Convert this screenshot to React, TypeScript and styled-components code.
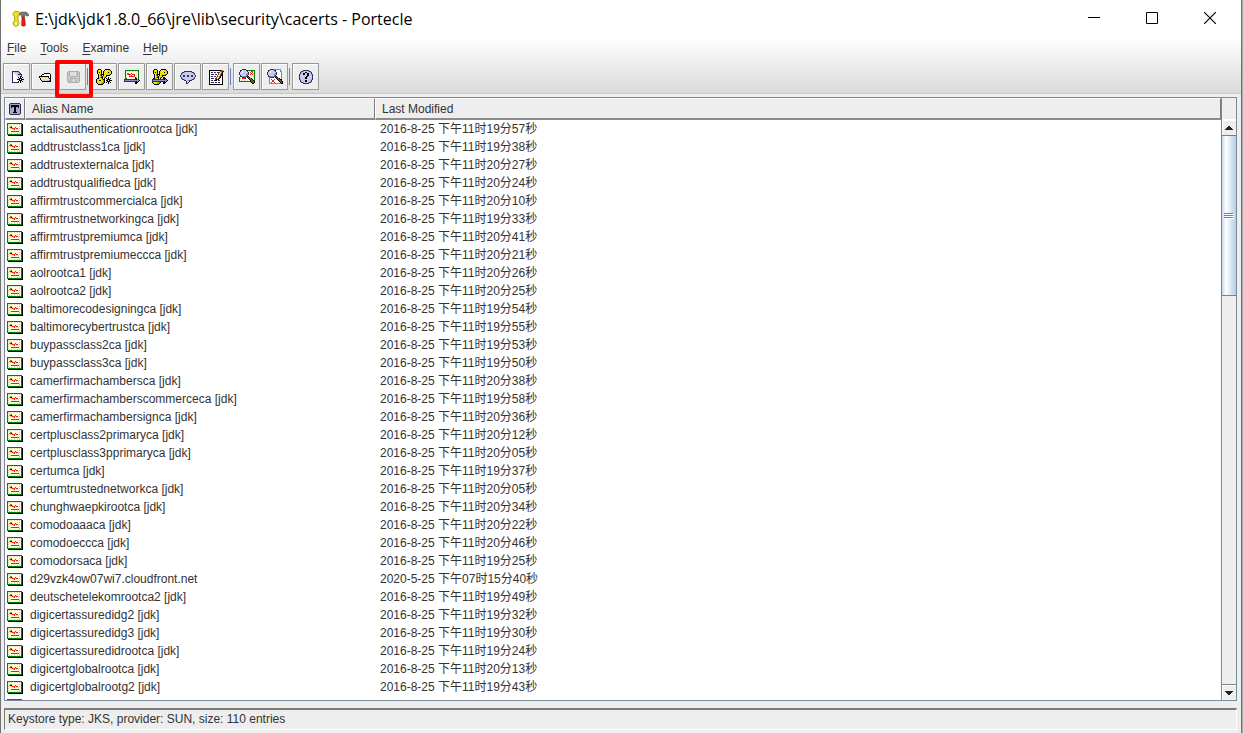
import React from 'react';
import styled, { createGlobalStyle, css } from 'styled-components';

const GlobalStyle = createGlobalStyle`
  *, *::before, *::after { box-sizing: border-box; }
  body {
    margin: 0;
    background: #a9a9ad;
    color: #333;
    font: 12px/18px "Liberation Sans", "Noto Sans CJK SC", sans-serif;
  }
  button { font: inherit; color: inherit; }
`;

const PALETTE: Record<string, string> = {
  k: '#000000', w: '#ffffff', g: '#008000', r: '#f01818', y: '#f0e000', o: '#a08c00',
  b: '#30305c', l: '#c8cce8', m: '#8a8fc0', n: '#808080', s: '#c8c8c8', d: '#adadad',
  e: '#dedede', t: '#f6dcae', c: '#8b4a22', a: '#3f9cff', p: '#d9ddfb', h: '#fff8a0',
  f: '#fdfbe4', q: '#a6a6c8', v: '#b8dca0', u: '#f0c060',
};

const CERT = [
  '................',
  'ggggggggggggggg.',
  'gfvfvffvffvfvfgk',
  'gvffffffffffffgk',
  'gffoofffffffvfgk',
  'gforkuffrfffffgk',
  'gvfuurorurrfvfgk',
  'gfffffurfufuffgk',
  'gvffffffffffvfgk',
  'gfffrrrrrrrrffgk',
  'gvffffffffffvfgk',
  'gfvfvffvffvfvfgk',
  'gggggggggggggggk',
  '.kkkkkkkkkkkkkkk',
];

const NEW = [
  '................',
  '................',
  '...bbbbbbb......',
  '...bpplllmb.....',
  '...bwpplllmb....',
  '...bwwpplbbbb...',
  '...bwwwpplllb...',
  '...bwwwwpplkb...',
  '...bwwwwwkwkwk..',
  '...bwwwwwwkkk...',
  '...bwwwwkkkwkkk.',
  '...bwwwwwwkkk...',
  '...bwwwwwkwkwk..',
  '...bbbbbbb.k....',
  '................',
  '................',
];

const OPEN = [
  '................',
  '................',
  '................',
  '................',
  '.......kkkkkk...',
  '.....kkwwwwwwk..',
  '....kwwwwwwwwk..',
  '..kkkkkkkkkkwk..',
  '..kttttttttkwk..',
  '...kttttttttkk..',
  '...kttttttttsk..',
  '....ksssssssck..',
  '.....kkkkkkkkk..',
  '................',
  '................',
  '................',
];

const SAVE = [
  '................',
  '................',
  '...ddddddddddd..',
  '..dsdeeeeeesdsd.',
  '..dsdeeeeeesdsd.',
  '..dsdeeeeeesdsd.',
  '..dsdeeeeeesdsd.',
  '..dssddddddsssd.',
  '..dsssssssssssd.',
  '..dssddddddsssd.',
  '..dssdsseedsssd.',
  '..dssdsseedsssd.',
  '..dssdsseedsssd.',
  '...ddddddddddd..',
  '................',
  '................',
];

const KEYPAIR = [
  '..kkk....kkkkk..',
  '.kyhyk..kyhyyyk.',
  '.kyyyk.kyyyyyyyk',
  '.kykyk.kyyyykyyk',
  '.kyyyk.kyyyyyyyk',
  '..kyokkkyyyyyok.',
  '..kyok.kyykkkk..',
  '..kyyokyyyk.....',
  '..kyokkyok..k...',
  '.kkyyyk.k.k.k.k.',
  'kyyyyyokk..kkk..',
  'kyykkyyok.kk.kkk',
  'kyyyyyyok..kkk..',
  'kyyyyyook.k.k.k.',
  '.kyyyook....k...',
  '..kkkkk.........',
];

const IMPORT_CERT = [
  '................',
  '.gggggggggggggg.',
  '.gfvfvffvffvfvg.',
  '.gffffffffffffg.',
  '.gfooffrffffvfg.',
  '.gforkrfrrrfffg.',
  '.gvffufrffrfvfg.',
  '.gfffrrrrrrfffg.',
  '.gvffffffffkvfg.',
  '.ggffffffffkkfg.',
  'bbbbbbbbbbbbkmk.',
  'bmmmmmmmmmmmmmmk',
  'bbbbbbbbbbbbkmk.',
  '...........kkk..',
  '...........kk...',
  '................',
];

const IMPORT_KEY = [
  '..kkk....kkkkk..',
  '.kyhyk..kyhyyyk.',
  '.kyyyk.kyyyyyyyk',
  '.kykyk.kyyyykyyk',
  '.kyyyk.kyyyyyyyk',
  '..kyokkkyyyyyok.',
  '..kyok.kyykkkk..',
  '..kyyokyyyk.....',
  '..kyokkyok.kk...',
  '.kkyyyk.k..kkk..',
  'bbbbbbbbbbbbkmk.',
  'bmmmmmmmmmmmmmmk',
  'bbbbbbbbbbbbkmk.',
  'kyyyyyook..kkk..',
  '.kyyyook...kk...',
  '..kkkkk.........',
];

const BALLOON = [
  '................',
  '................',
  '....bbbbbbbb....',
  '..bbmllllllmbb..',
  '.bmllllllllllmb.',
  '.bllllllllllllb.',
  'bllbbllbbllbbllb',
  'bllbbllbbllbbllb',
  '.bllllllllllllb.',
  '.bmllllllllllmb.',
  '..bbmllllllmbb..',
  '....bbllmbbb....',
  '......bllb......',
  '......blb.......',
  '......bb........',
  '................',
];

const REPORT = [
  '................',
  '.kkkkkkkkkkkkcc.',
  '.kwwwwwwwwwwcrck',
  '.kwbbwbbwbbctok.',
  '.kwwwwwwwwctyck.',
  '.kwbbbwbbwctckk.',
  '.kwwwwwwwctyckk.',
  '.kwbbwbbwctckwk.',
  '.kwwwwwwctyckwk.',
  '.kwbbbwbctckwwk.',
  '.kwwwwwckckwwwk.',
  '.kwbbwbkkwbbwwk.',
  '.kwwwwwwwwwwwwk.',
  '.kwbbbwbbwbbwwk.',
  '.kwwwwwwwwwwwwk.',
  '.kkkkkkkkkkkkkk.',
];

const VIEW_CERT = [
  '...bbbb.........',
  '.bbllllbbggggggg',
  '.blwllllbfvfrrfg',
  'bllwlllllbfrfrfg',
  'blllllllmbffrfvg',
  'bllllllmmbfrfrfg',
  '.blllllmbffffffg',
  '.bbmmmmbbkffffvg',
  'gffbbbbfkckffffg',
  'gvfrrrrffkcckffg',
  'gfffffffffkcckfg',
  'gfvffvffvffkcckg',
  'gggggggggggkccck',
  '............kcck',
  '.............kk.',
  '................',
];

const VIEW_CRL = [
  '...bbbbaaaaaaa..',
  '.bbllllbbwwwwa..',
  '.blwllllbwwwwaa.',
  'bllwlllllbwwwwa.',
  'blllllllmbwwwwa.',
  'bllllllmmbwwwwa.',
  '.blllllmbwwwwwa.',
  '.bbmmmmbbkwwwwa.',
  '..abbbbwkckwwwa.',
  '..awwwwwwkcckwa.',
  '..awrwwrwwkcckk.',
  '..awwrrwwwwkcck.',
  '..awwrrwwwwwkcck',
  '..awrwwrwwwwwkck',
  '..aaaaaaaaaaaakk',
  '................',
];

const HELP = [
  '................',
  '.....bbbbbb.....',
  '...bbmllllmbb...',
  '..bmlllkklllmb..',
  '..bllkkllkkllb..',
  '.bmllkkllkkllmb.',
  '.blllllllkklllb.',
  '.bllllllkkllllb.',
  '.blllllkklllllb.',
  '.blllllkklllllb.',
  '.bmllllllllllmb.',
  '..bllllkkllllb..',
  '..bmlllkklllmb..',
  '...bbmllllmbb...',
  '.....bbbbbb.....',
  '................',
];

const TYPE = [
  '............',
  '.bbbbbbbbbb.',
  'bqqqqqqqqqqb',
  'bqkkkkkkkkqb',
  'bqkkkkkkkkqb',
  'bqkqqkkqqkqb',
  'bqqqqkkqqqqb',
  'bqqqqkkqqqqb',
  'bqqqqkkqqqqb',
  'bqqqqkkqqqqb',
  'bqqqkkkkqqqb',
  'bqqqqqqqqqqb',
  '.bbbbbbbbbb.',
];

const IconSvg = styled.svg`
  display: block;
  flex: none;
`;

const PixelIcon = ({ map }: { map: string[] }) => {
  const shapes: Record<string, string> = {};
  map.forEach((line, y) => {
    [...line].forEach((ch, x) => {
      if (ch !== '.') shapes[ch] = (shapes[ch] || '') + `M${x} ${y}h1v1h-1z`;
    });
  });
  const w = map[0].length;
  return (
    <IconSvg width={w} height={map.length} viewBox={`0 0 ${w} ${map.length}`} shapeRendering="crispEdges" aria-hidden="true">
      {Object.entries(shapes).map(([ch, d]) => <path key={ch} d={d} fill={PALETTE[ch]} />)}
    </IconSvg>
  );
};

const Window = styled.div`
  display: flex;
  flex-direction: column;
  height: 100vh;
  margin-right: 1px;
  border: solid #707070;
  border-width: 0 1px;
  background: #eee;
`;

const TitleBar = styled.header`
  display: flex;
  align-items: center;
  height: 38px;
  padding: 0 2px 0 10px;
  background: #fff;
`;

const Title = styled.h1`
  flex: 1;
  margin: 0 0 0 6px;
  color: #000;
  font: 400 16px/20px "Open Sans", sans-serif;
  white-space: nowrap;
`;

const CaptionButton = styled.button`
  display: grid;
  place-items: center;
  align-self: flex-start;
  width: 58px;
  height: 36px;
  padding: 0;
  border: 0;
  background: none;
`;

const Bars = styled.div`
  flex: none;
  border-bottom: 1px solid #c8c8c8;
  background: linear-gradient(#fff, #dadada);
`;

const MenuBar = styled.nav`
  display: flex;
  gap: 14px;
  height: 20px;
  padding-left: 6px;
`;

const MenuItem = styled.button`
  padding: 0;
  border: 0;
  background: none;
  line-height: 20px;
`;

const Mnemonic = styled.span`
  text-decoration: underline;
  text-underline-offset: 2px;
`;

const ToolBar = styled.div`
  display: flex;
  gap: 1px;
  padding: 5px 2px 3px;
`;

const ToolButton = styled.button`
  display: grid;
  place-items: center;
  width: 27px;
  height: 27px;
  padding: 1px 0 0 1px;
  border: 1px solid #999;
  background: #eee;
  box-shadow: inset 1px 1px #fff;
`;

const Marked = styled.div`
  position: relative;

  &::after {
    content: "";
    position: absolute;
    inset: -3px -7px -8px -4px;
    border: 4px solid #ff0000;
    border-radius: 2px;
  }
`;

const Divider = styled.span`
  width: 1px;
  height: 17px;
  margin: 5px 1px 0 0;
  background: #6382bf;
`;

const Pane = styled.main`
  display: flex;
  flex: 1;
  min-height: 0;
  margin: 3px 4px 7px 3px;
  border: 1px solid #7a8a99;
`;

const TableView = styled.div`
  flex: 1;
  overflow: hidden;
  background: #fff;
`;

const Table = styled.table`
  width: 100%;
  table-layout: fixed;
  border-collapse: separate;
  border-spacing: 0;
`;

const HeadCell = styled.th<{ $icon?: boolean }>`
  height: 22px;
  padding: 0 0 0 6px;
  border: solid;
  border-width: 1px 1px 2px 1px;
  border-color: #fff #7a7a7a #8c8c8c #fff;
  background: #eee;
  font-weight: 400;
  text-align: left;
  ${(p) => p.$icon && css`padding: 0 0 0 3px;`}
`;

const Cell = styled.td<{ $icon?: boolean }>`
  height: 18px;
  padding: 0 5px;
  white-space: nowrap;
  ${(p) => p.$icon && css`padding: 0 0 0 2px;`}
`;

const ScrollColumn = styled.div`
  display: flex;
  flex-direction: column;
  width: 15px;
  border-left: 1px solid #7a8a99;
  background: #eee;
`;

const Corner = styled.div`
  height: 22px;
  border-bottom: 1px solid #fff;
`;

const ScrollButton = styled.button`
  display: grid;
  place-items: center;
  flex: none;
  height: 15px;
  padding: 0;
  border: 0;
  background: #eee;
  box-shadow: inset 1px 1px #fff;
`;

const Track = styled.div`
  flex: 1;
  border-bottom: 1px solid #7a8a99;
`;

const Thumb = styled.div`
  display: grid;
  place-items: center;
  height: calc(100% * 32 / 109);
  margin-left: -1px;
  border: 1px solid #6382bf;
  border-right: 0;
  background: linear-gradient(90deg, #c8d8ea, #fff 30%, #dce8f2 60%, #b8cfe5);
`;

const StatusBar = styled.footer`
  flex: none;
  height: 22px;
  margin: 0 4px 3px 3px;
  padding-left: 3px;
  border: solid;
  border-width: 2px 1px 1px 1px;
  border-color: #7a7a7a #fff #fff #7a7a7a;
  line-height: 18px;
`;

const T = '2016-8-25 下午11时';
const ENTRIES: [string, string][] = [
  ['actalisauthenticationrootca [jdk]', T + '19分57秒'],
  ['addtrustclass1ca [jdk]', T + '19分38秒'],
  ['addtrustexternalca [jdk]', T + '20分27秒'],
  ['addtrustqualifiedca [jdk]', T + '20分24秒'],
  ['affirmtrustcommercialca [jdk]', T + '20分10秒'],
  ['affirmtrustnetworkingca [jdk]', T + '19分33秒'],
  ['affirmtrustpremiumca [jdk]', T + '20分41秒'],
  ['affirmtrustpremiumeccca [jdk]', T + '20分21秒'],
  ['aolrootca1 [jdk]', T + '20分26秒'],
  ['aolrootca2 [jdk]', T + '20分25秒'],
  ['baltimorecodesigningca [jdk]', T + '19分54秒'],
  ['baltimorecybertrustca [jdk]', T + '19分55秒'],
  ['buypassclass2ca [jdk]', T + '19分53秒'],
  ['buypassclass3ca [jdk]', T + '19分50秒'],
  ['camerfirmachambersca [jdk]', T + '20分38秒'],
  ['camerfirmachamberscommerceca [jdk]', T + '19分58秒'],
  ['camerfirmachambersignca [jdk]', T + '20分36秒'],
  ['certplusclass2primaryca [jdk]', T + '20分12秒'],
  ['certplusclass3pprimaryca [jdk]', T + '20分05秒'],
  ['certumca [jdk]', T + '19分37秒'],
  ['certumtrustednetworkca [jdk]', T + '20分05秒'],
  ['chunghwaepkirootca [jdk]', T + '20分34秒'],
  ['comodoaaaca [jdk]', T + '20分22秒'],
  ['comodoeccca [jdk]', T + '20分46秒'],
  ['comodorsaca [jdk]', T + '19分25秒'],
  ['d29vzk4ow07wi7.cloudfront.net', '2020-5-25 下午07时15分40秒'],
  ['deutschetelekomrootca2 [jdk]', T + '19分49秒'],
  ['digicertassuredidg2 [jdk]', T + '19分32秒'],
  ['digicertassuredidg3 [jdk]', T + '19分30秒'],
  ['digicertassuredidrootca [jdk]', T + '19分24秒'],
  ['digicertglobalrootca [jdk]', T + '20分13秒'],
  ['digicertglobalrootg2 [jdk]', T + '19分43秒'],
  ['', ''],
];

const AppLogo = () => (
  <IconSvg width="18" height="18" viewBox="0 0 18 18" aria-hidden="true">
    <path d="M6 1.500a2.500 2.500 0 0 1 1 4.900V11a3 3 0 1 1-3.500-.2V6.400A2.600 2.600 0 0 1 6 1.500z" fill="#e8dc28" stroke="#a89c10" strokeWidth=".8" />
    <circle cx="5" cy="13.500" r="1" fill="#fff" />
    <path d="M8 4.500 10 2h5l2.500 2v2h-2l-1-1h-1v2h-3V5z" fill="#777" stroke="#555" strokeWidth=".6" />
    <path d="M11 7h2.600l.9 8.500q-2 1.500-4 0z" fill="#e81c10" stroke="#a01008" strokeWidth=".5" />
  </IconSvg>
);

const Arrow = ({ down }: { down?: boolean }) => (
  <IconSvg width="8" height="4" viewBox="0 0 8 4" shapeRendering="crispEdges" aria-hidden="true">
    <path d={down ? 'M0 0h8v1H7v1H6v1H5v1H3V3H2V2H1V1H0z' : 'M0 4h8V3H7V2H6V1H5V0H3v1H2v1H1v1H0z'} fill="#222" />
  </IconSvg>
);

const Tool = ({ label, map, disabled }: { label: string; map: string[]; disabled?: boolean }) => (
  <ToolButton type="button" aria-label={label} title={label} disabled={disabled}>
    <PixelIcon map={map} />
  </ToolButton>
);

export default function App() {
  return (
    <>
      <GlobalStyle />
      <Window>
        <TitleBar>
          <AppLogo />
          <Title>E:\jdk\jdk1.8.0_66\jre\lib\security\cacerts - Portecle</Title>
          <CaptionButton type="button" aria-label="Minimize">
            <IconSvg width="12" height="12"><path d="M0 5.500h12" stroke="#000" /></IconSvg>
          </CaptionButton>
          <CaptionButton type="button" aria-label="Maximize">
            <IconSvg width="12" height="12"><path d="M.5.5h11v11H.5z" fill="none" stroke="#000" /></IconSvg>
          </CaptionButton>
          <CaptionButton type="button" aria-label="Close">
            <IconSvg width="12" height="12"><path d="m0 0 12 12M12 0 0 12" stroke="#000" strokeWidth="1.200" /></IconSvg>
          </CaptionButton>
        </TitleBar>
        <Bars>
          <MenuBar aria-label="Main menu">
            {['File', 'Tools', 'Examine', 'Help'].map((name) => (
              <MenuItem key={name} type="button"><Mnemonic>{name[0]}</Mnemonic>{name.slice(1)}</MenuItem>
            ))}
          </MenuBar>
          <ToolBar role="toolbar" aria-label="Tools">
            <Tool label="New keystore" map={NEW} />
            <Tool label="Open keystore" map={OPEN} />
            <Marked><Tool label="Save keystore" map={SAVE} disabled /></Marked>
            <Divider />
            <Tool label="Generate key pair" map={KEYPAIR} />
            <Tool label="Import trusted certificate" map={IMPORT_CERT} />
            <Tool label="Import key pair" map={IMPORT_KEY} />
            <Tool label="Set password" map={BALLOON} />
            <Tool label="Keystore report" map={REPORT} />
            <Divider />
            <Tool label="Examine certificate" map={VIEW_CERT} />
            <Tool label="Examine CRL" map={VIEW_CRL} />
            <Divider />
            <Tool label="Help" map={HELP} />
          </ToolBar>
        </Bars>
        <Pane>
          <TableView>
            <Table>
              <colgroup>
                <col width="20" />
                <col width="350" />
                <col />
              </colgroup>
              <thead>
                <tr>
                  <HeadCell $icon aria-label="Type"><PixelIcon map={TYPE} /></HeadCell>
                  <HeadCell>Alias Name</HeadCell>
                  <HeadCell>Last Modified</HeadCell>
                </tr>
              </thead>
              <tbody>
                {ENTRIES.map(([alias, modified], i) => (
                  <tr key={i}>
                    <Cell $icon><PixelIcon map={CERT} /></Cell>
                    <Cell>{alias}</Cell>
                    <Cell>{modified}</Cell>
                  </tr>
                ))}
              </tbody>
            </Table>
          </TableView>
          <ScrollColumn>
            <Corner />
            <ScrollButton type="button" aria-label="Scroll up"><Arrow /></ScrollButton>
            <Track>
              <Thumb>
                <IconSvg width="10" height="6" shapeRendering="crispEdges" aria-hidden="true">
                  <path d="M0 0h9v1H0zM0 2h9v1H0zM0 4h9v1H0z" fill="#6382bf" />
                  <path d="M1 1h9v1H1zM1 3h9v1H1zM1 5h9v1H1z" fill="#fff" />
                </IconSvg>
              </Thumb>
            </Track>
            <ScrollButton type="button" aria-label="Scroll down"><Arrow down /></ScrollButton>
          </ScrollColumn>
        </Pane>
        <StatusBar role="status">Keystore type: JKS, provider: SUN, size: 110 entries</StatusBar>
      </Window>
    </>
  );
}
